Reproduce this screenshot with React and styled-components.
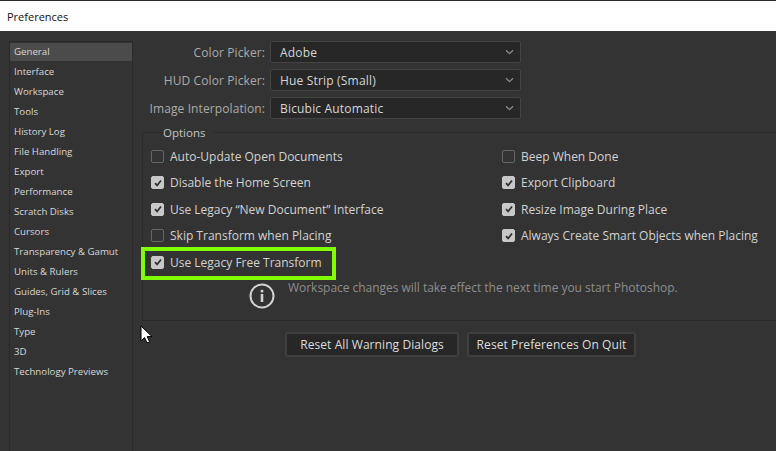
import React from 'react'
import styled, { createGlobalStyle } from 'styled-components'

const GlobalStyle = createGlobalStyle`
  html, body { margin: 0; padding: 0; background: #333; }
  body { font-family: "Open Sans", "Noto Sans", sans-serif; overflow: hidden; }
`

const Window = styled.div`
  position: relative;
  width: 776px;
  height: 451px;
  overflow: hidden;
  background: #333333;
  display: flex;
  flex-direction: column;
`

const TitleBar = styled.div`
  height: 30px;
  flex: none;
  background: #fff;
  border-top: 1px solid #2b2b2b;
  padding-left: 7px;
  display: flex;
  align-items: center;
  font-size: 11px;
  color: #111;
`

const Body = styled.div`
  flex: 1;
  display: flex;
  padding: 10px 0 0 9px;
  min-height: 0;
`

const Sidebar = styled.ul`
  list-style: none;
  margin: 0;
  padding: 1px 0 0;
  width: 122px;
  flex: none;
  border-left: 1px solid #2a2a2a;
  border-right: 1px solid #2a2a2a;
  border-top: 1px solid #2a2a2a;
`

const SideItem = styled.li`
  box-sizing: border-box;
  height: ${p => (p.$active ? 18 : 20)}px;
  margin-bottom: ${p => (p.$active ? 2 : 0)}px;
  padding: 0 0 2px 4px;
  display: flex;
  align-items: center;
  font-size: 9.7px;
  color: #d8d8d8;
  background: ${p => (p.$active ? '#4b4b4b' : 'transparent')};
  position: relative;
  top: ${p => (p.$active ? 0 : -1)}px;
`

const Main = styled.div`
  flex: 1;
  padding-left: 9px;
  min-width: 0;
`

const PickerRows = styled.div`
  display: flex;
  flex-direction: column;
  gap: 6px;
`

const PickerRow = styled.div`
  display: flex;
  align-items: center;
  gap: 5px;
`

const PickerLabel = styled.label`
  width: 123px;
  text-align: right;
  white-space: nowrap;
  font-size: 12px;
  letter-spacing: 0.1px;
  color: #ababab;
`

const Select = styled.div`
  box-sizing: border-box;
  width: 251px;
  height: 22px;
  background: #272727;
  border: 1px solid #444;
  border-radius: 2px;
  padding: 0 6px 0 9px;
  display: flex;
  align-items: center;
  justify-content: space-between;
  font-size: 12px;
  letter-spacing: 0.18px;
  color: #d6d6d6;
`

const Options = styled.fieldset`
  box-sizing: border-box;
  margin: 6px -10px 0 0;
  padding: 3px 0 0 8px;
  height: 196px;
  border: 1px solid #2a2a2a;
  border-right: none;
  min-width: 0;
`

const Legend = styled.legend`
  margin-left: 13px;
  padding: 0 7px 0 0;
  font-size: 11.5px;
  color: #c4c4c4;
  position: relative;
  left: -1px;
`

const OptionGrid = styled.div`
  display: grid;
  grid-template-columns: 351px 1fr;
  grid-auto-rows: 26.5px;
`

const Option = styled.div`
  display: flex;
  align-items: center;
  gap: 6px;
  white-space: nowrap;
  font-size: 12px;
  color: #d2d2d2;
`

const Box = styled.span`
  box-sizing: border-box;
  width: 13px;
  height: 13px;
  flex: none;
  border-radius: 2px;
  display: flex;
  align-items: center;
  justify-content: center;
  background: ${p => (p.$on ? '#c8c8c8' : 'transparent')};
  border: 1px solid ${p => (p.$on ? '#c8c8c8' : '#666')};
`

const Notice = styled.div`
  display: flex;
  align-items: flex-start;
  gap: 13px;
  margin: 7px 0 0 98px;
  font-size: 12px;
  letter-spacing: -0.03px;
  color: #8d8d8d;
`

const NoticeText = styled.span`
  position: relative;
  top: -4px;
  white-space: nowrap;
`

const Buttons = styled.div`
  display: flex;
  gap: 8px;
  margin: 11px 0 0 143px;
`

const Button = styled.button`
  box-sizing: border-box;
  height: 25px;
  width: ${p => p.$w}px;
  background: #272727;
  border: 2px solid #3f3f3f;
  border-radius: 3px;
  padding: 0;
  font-family: inherit;
  font-size: 12px;
  letter-spacing: 0.08px;
  color: #dcdcdc;
`

const Highlight = styled.div`
  position: absolute;
  left: 141px;
  top: 247px;
  width: 195px;
  height: 33px;
  box-sizing: border-box;
  border: 4px solid #7fff00;
  pointer-events: none;
`

const Cursor = styled.svg`
  position: absolute;
  left: 140px;
  top: 325px;
`

const Chevron = () => (
  <svg width="9" height="6" viewBox="0 0 9 6" fill="none">
    <path d="M1 1.2 4.5 4.6 8 1.2" stroke="#8a8a8a" strokeWidth="1.3" />
  </svg>
)

const Check = () => (
  <svg width="8" height="8" viewBox="0 0 8 8" fill="none">
    <path d="M1 4.2 3.1 6.4 7 1.4" stroke="#2f2f2f" strokeWidth="1.7" />
  </svg>
)

const InfoIcon = () => (
  <svg width="26" height="26" viewBox="0 0 26 26" fill="none">
    <circle cx="13" cy="13" r="11.5" stroke="#d2d2d2" strokeWidth="2" />
    <rect x="11.7" y="11" width="2.6" height="8" fill="#d2d2d2" />
    <rect x="11.7" y="6.8" width="2.6" height="2.6" fill="#d2d2d2" />
  </svg>
)

const categories = [
  'General', 'Interface', 'Workspace', 'Tools', 'History Log', 'File Handling', 'Export',
  'Performance', 'Scratch Disks', 'Cursors', 'Transparency & Gamut', 'Units & Rulers',
  'Guides, Grid & Slices', 'Plug-Ins', 'Type', '3D', 'Technology Previews',
]

const pickers = [
  ['Color Picker:', 'Adobe'],
  ['HUD Color Picker:', 'Hue Strip (Small)'],
  ['Image Interpolation:', 'Bicubic Automatic'],
]

// rows run left, right, left, right...
const options = [
  ['Auto-Update Open Documents', false],
  ['Beep When Done', false],
  ['Disable the Home Screen', true],
  ['Export Clipboard', true],
  ['Use Legacy “New Document” Interface', true],
  ['Resize Image During Place', true],
  ['Skip Transform when Placing', false],
  ['Always Create Smart Objects when Placing', true],
  ['Use Legacy Free Transform', true],
]

export default function App() {
  return (
    <Window>
      <GlobalStyle />
      <TitleBar>Preferences</TitleBar>
      <Body>
        <Sidebar>
          {categories.map((name, i) => (
            <SideItem key={name} $active={i === 0}>{name}</SideItem>
          ))}
        </Sidebar>
        <Main>
          <PickerRows>
            {pickers.map(([label, value]) => (
              <PickerRow key={label}>
                <PickerLabel>{label}</PickerLabel>
                <Select>{value}<Chevron /></Select>
              </PickerRow>
            ))}
          </PickerRows>
          <Options>
            <Legend>Options</Legend>
            <OptionGrid>
              {options.map(([label, on]) => (
                <Option key={label}>
                  <Box $on={on}>{on && <Check />}</Box>
                  {label}
                </Option>
              ))}
            </OptionGrid>
            <Notice>
              <InfoIcon />
              <NoticeText>Workspace changes will take effect the next time you start Photoshop.</NoticeText>
            </Notice>
          </Options>
          <Buttons>
            <Button $w={174}>Reset All Warning Dialogs</Button>
            <Button $w={169}>Reset Preferences On Quit</Button>
          </Buttons>
        </Main>
      </Body>
      <Highlight />
      <Cursor width="13" height="20" viewBox="0 0 13 20">
        <path d="M1 1v15l3.6-3.4L7 18l2.6-1.2-2.4-5.2h4.8z" fill="#fff" stroke="#000" strokeWidth="1" />
      </Cursor>
    </Window>
  )
}
